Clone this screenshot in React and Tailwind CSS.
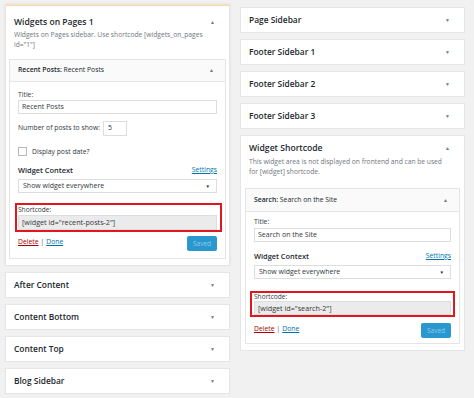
const Arrow = ({ up }) => (
    <span className="text-[5px] text-[#72777c] leading-none">{up ? "▲" : "▼"}</span>
);

const Collapsed = ({ title }) => (
    <div className="h-[26px] bg-white border border-[#e5e5e5] flex items-center justify-between pl-2 pr-[14px] shrink-0">
        <span className="text-[8.4px] font-semibold text-[#23282d]">{title}</span>
        <Arrow />
    </div>
);

const Label = ({ children }) => (
    <div className="text-[6.8px] text-[#32373c] leading-[10px]">{children}</div>
);

const Footer = ({ top }) => (
    <div className={`flex items-start justify-between ${top}`}>
        <div className="text-[6.8px] leading-[10px] mt-[1px]">
            <span className="text-[#a00] underline">Delete</span>
            <span className="text-[#555] mx-[2px]">|</span>
            <span className="text-[#0073aa] underline">Done</span>
        </div>
        <div className="w-[30px] h-[15px] bg-[#2a98cf] text-[#8ecbe8] text-[6.5px] flex items-center justify-center rounded-[2px]">
            Saved
        </div>
    </div>
);

const WidgetContext = () => (
    <>
        <div className="flex justify-between items-center leading-[10px]">
            <span className="text-[7.4px] font-semibold text-[#23282d]">Widget Context</span>
            <span className="text-[6.8px] text-[#0073aa] underline">Settings</span>
        </div>
        <div className="h-[14px] mt-[4px] bg-white border border-[#ddd] flex items-center justify-between pl-[4px] pr-[6px] text-[7px] text-[#32373c]">
            <span>Show widget everywhere</span>
            <span className="text-[4.5px] text-[#222]">▼</span>
        </div>
    </>
);

export default function App() {
    return (
        <div className="w-[474px] h-[398px] bg-[#f1f1f1] overflow-hidden flex gap-[10px] pl-[5px]" style={{ fontFamily: '"Open Sans", sans-serif' }}>
            <div className="w-[225px] flex flex-col gap-[6px] pt-[5px]">
                <div className="h-[261px] bg-white border border-[#e5e5e5] border-t-[#f3d9b1] shadow-[0_-1px_2px_rgba(240,180,100,0.35)] shrink-0 flex flex-col">
                    <div className="flex justify-between items-center pl-2 pr-[14px] pt-[10px] leading-[12px]">
                        <span className="text-[8.6px] font-semibold text-[#23282d]">Widgets on Pages 1</span>
                        <Arrow up />
                    </div>
                    <div className="px-2 mt-[2px] text-[6.7px] leading-[10px] text-[#72777c]">
                        Widgets on Pages sidebar. Use shortcode [widgets_on_pages<br />id="1"]
                    </div>
                    <div className="ml-[3px] mt-[9px] border border-[#e5e5e5] w-[217px]">
                        <div className="h-[22px] bg-[#fafafa] border-b border-[#e5e5e5] flex items-center justify-between pl-[8px] pr-[11px]">
                            <span className="text-[6.8px] text-[#23282d]"><span className="font-semibold">Recent Posts:</span> Recent Posts</span>
                            <Arrow up />
                        </div>
                        <div className="px-[8px] pt-[8px] pb-[7px] flex flex-col">
                            <Label>Title:</Label>
                            <div className="h-[14px] bg-white border border-[#ddd] flex items-center px-[3px] text-[7px] text-[#32373c]">
                                Recent Posts
                            </div>
                            <div className="flex items-center gap-[3px] mt-[7px] text-[6.8px] text-[#32373c]">
                                <span>Number of posts to show:</span>
                                <div className="w-[24px] h-[15px] border border-[#ddd] bg-white px-[4px] text-[7px] flex items-center">5</div>
                            </div>
                            <div className="flex items-center gap-[5px] mt-[11px] text-[6.8px] text-[#32373c] leading-[9px]">
                                <div className="w-[9px] h-[9px] border border-[#b4b9be] bg-white"></div>
                                <span>Display post date?</span>
                            </div>
                            <div className="mt-[9px]">
                                <WidgetContext />
                            </div>
                            <div className="mt-[10px] border-2 border-[#e2161d] -ml-[3px] -mr-[5px] pl-[1px] pr-[3px]">
                                <div className="text-[6.6px] text-[#32373c] leading-[10px]">Shortcode:</div>
                                <div className="h-[15px] bg-[#ebebeb] border border-[#ddd] flex items-center px-[3px] text-[7.2px] text-[#32373c]">
                                    [widget id="recent-posts-2"]
                                </div>
                            </div>
                            <Footer top="mt-[4px]" />
                        </div>
                    </div>
                </div>
                <Collapsed title="After Content" />
                <Collapsed title="Content Bottom" />
                <Collapsed title="Content Top" />
                <Collapsed title="Blog Sidebar" />
            </div>
            <div className="w-[225px] flex flex-col gap-[6px] pt-[7px]">
                <Collapsed title="Page Sidebar" />
                <Collapsed title="Footer Sidebar 1" />
                <Collapsed title="Footer Sidebar 2" />
                <Collapsed title="Footer Sidebar 3" />
                <div className="h-[216px] bg-white border border-[#e5e5e5] shrink-0 flex flex-col">
                    <div className="flex justify-between items-center pl-[8px] pr-[14px] pt-[6px] leading-[12px]">
                        <span className="text-[8.6px] font-semibold text-[#23282d]">Widget Shortcode</span>
                        <Arrow up />
                    </div>
                    <div className="px-2 mt-[3px] text-[6.7px] leading-[10px] text-[#72777c]">
                        This widget area is not displayed on frontend and can be used<br />for [widget] shortcode.
                    </div>
                    <div className="ml-[4px] mt-[11px] border border-[#e5e5e5] w-[215px]">
                        <div className="h-[23px] bg-[#fafafa] border-b border-[#e5e5e5] flex items-center justify-between pl-[8px] pr-[11px]">
                            <span className="text-[6.8px] text-[#23282d]"><span className="font-semibold">Search:</span> Search on the Site</span>
                            <Arrow up />
                        </div>
                        <div className="px-[8px] pt-[5px] pb-[5px] flex flex-col">
                            <Label>Title:</Label>
                            <div className="h-[14px] mt-[1px] bg-white border border-[#ddd] flex items-center px-[3px] text-[7px] text-[#32373c]">
                                Search on the Site
                            </div>
                            <div className="mt-[9px]">
                                <WidgetContext />
                            </div>
                            <div className="mt-[12px] border-2 border-[#e2161d] -mx-[4px] px-[2px]">
                                <div className="text-[6.6px] text-[#32373c] leading-[8px]">Shortcode:</div>
                                <div className="h-[14px] bg-[#ebebeb] border border-[#ddd] flex items-center px-[3px] text-[7.2px] text-[#32373c]">
                                    [widget id="search-2"]
                                </div>
                            </div>
                            <Footer top="mt-[6px]" />
                        </div>
                    </div>
                </div>
            </div>
        </div>
    );
}
